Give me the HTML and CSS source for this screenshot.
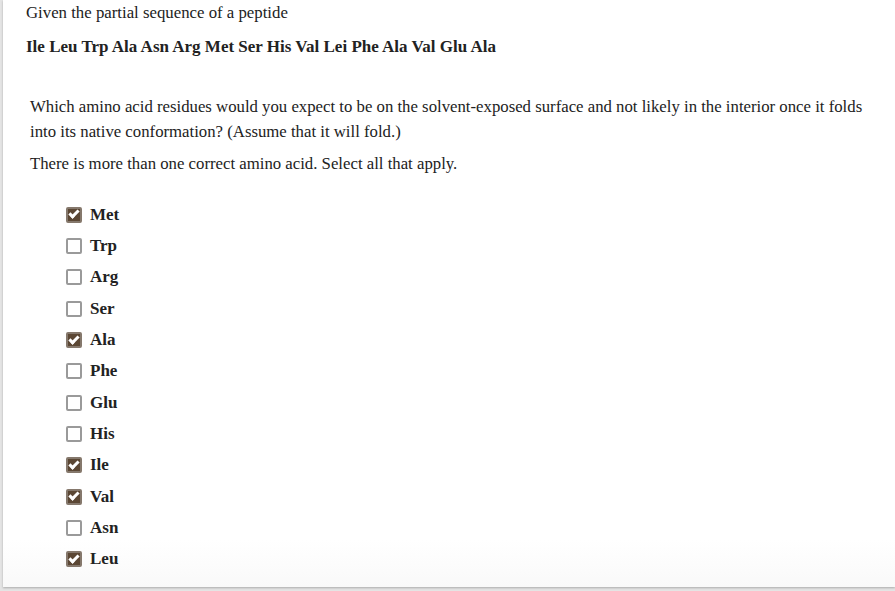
FILE: index.html
```html
<!DOCTYPE html>
<html>
<head>
<meta charset="utf-8">
<link rel="stylesheet" href="styles.css">
</head>
<body>
<div class="page">
  <div class="card">
    <div class="intro">
      <p class="lead">Given the partial sequence of a peptide</p>
      <p class="seq">Ile Leu Trp Ala Asn Arg Met Ser His Val Lei Phe Ala Val Glu Ala</p>
    </div>
    <div class="question">
      <p class="q">Which amino acid residues would you expect to be on the solvent-exposed surface and not likely in the interior once it folds into its native conformation? (Assume that it will fold.)</p>
      <p class="q2">There is more than one correct amino acid. Select all that apply.</p>
      <ul class="options">
        <li class="opt"><span class="box checked"></span><span class="lbl">Met</span></li>
        <li class="opt"><span class="box"></span><span class="lbl">Trp</span></li>
        <li class="opt"><span class="box"></span><span class="lbl">Arg</span></li>
        <li class="opt"><span class="box"></span><span class="lbl">Ser</span></li>
        <li class="opt"><span class="box checked"></span><span class="lbl">Ala</span></li>
        <li class="opt"><span class="box"></span><span class="lbl">Phe</span></li>
        <li class="opt"><span class="box"></span><span class="lbl">Glu</span></li>
        <li class="opt"><span class="box"></span><span class="lbl">His</span></li>
        <li class="opt"><span class="box checked"></span><span class="lbl">Ile</span></li>
        <li class="opt"><span class="box checked"></span><span class="lbl">Val</span></li>
        <li class="opt"><span class="box"></span><span class="lbl">Asn</span></li>
        <li class="opt"><span class="box checked"></span><span class="lbl">Leu</span></li>
      </ul>
    </div>
  </div>
</div>
</body>
</html>
```
FILE: styles.css
```css
html, body {
  margin: 0;
  padding: 0;
  background: #e4e4e4;
}
body {
  font-family: "Liberation Serif", "Times New Roman", serif;
  color: #222;
  height: 591px;
  overflow: hidden;
}
.page {
  padding-left: 3px;
}
.card {
  height: 587px;
  box-shadow: 0 1px 2px rgba(0,0,0,0.25);
  background: linear-gradient(#fff 540px, #f9f9f9 587px);
  box-sizing: border-box;
}
.intro {
  padding: 3px 0 0 23px;
}
.lead {
  margin: 0;
  font-size: 16.8px;
  line-height: 20px;
}
.seq {
  margin: 14px 0 0 0;
  font-size: 17px;
  line-height: 20px;
  font-weight: bold;
}
.question {
  padding: 37px 0 0 27px;
}
.q {
  margin: 0;
  font-size: 16.75px;
  line-height: 25px;
  padding-right: 20px;
}
.q2 {
  margin: 7px 0 0 0;
  font-size: 16.75px;
  line-height: 25px;
}
.options {
  list-style: none;
  margin: 23px 0 0 0;
  padding: 0 0 0 36px;
}
.opt {
  display: flex;
  align-items: center;
  gap: 8px;
  height: 31.35px;
  font-size: 17px;
  font-weight: bold;
}
.box {
  width: 16px;
  height: 16px;
  box-sizing: border-box;
  border: 2px solid #9a9a9a;
  border-radius: 2px;
  background: #fff;
  position: relative;
}
.box.checked {
  background: #5b4734;
  border-color: #85786c;
}
.box.checked::after {
  content: "";
  position: absolute;
  width: 7px;
  height: 3px;
  border-left: 3px solid #fff;
  border-bottom: 3px solid #fff;
  transform: rotate(-45deg);
  left: 1px;
  top: 1.5px;
}
```
